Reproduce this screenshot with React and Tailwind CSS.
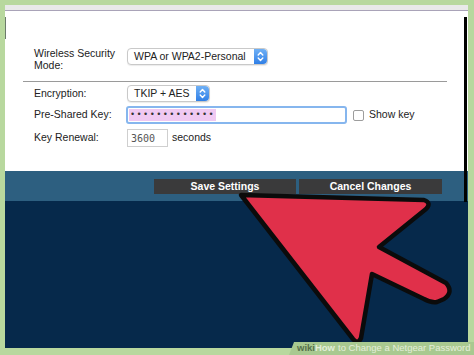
import React from "react";

function Stepper() {
  return (
    <div className="flex h-full w-[13px] items-center justify-center rounded-r-[4px] bg-gradient-to-b from-[#6fb0f5] to-[#2f7fe6]">
      <svg width="7" height="11" viewBox="0 0 7 11" fill="none" stroke="white" strokeWidth="1.4" strokeLinecap="round" strokeLinejoin="round">
        <path d="M1.2 4 L3.5 1.6 L5.8 4" />
        <path d="M1.2 7 L3.5 9.4 L5.8 7" />
      </svg>
    </div>
  );
}

function Select({ label, width }) {
  return (
    <div className={`flex h-[17px] ${width} items-stretch rounded-[4px] border border-[#c9c9c9] bg-white shadow-[0_1px_1px_rgba(0,0,0,0.08)]`}>
      <div className="flex flex-1 items-center pl-[6px] text-[10.5px] text-[#222]">{label}</div>
      <Stepper />
    </div>
  );
}

export default function App() {
  return (
    <div className="relative h-[355px] w-[474px] overflow-hidden bg-[#b8d89e] font-['Liberation_Sans',Arial,sans-serif]">
      <div className="ml-[5px] pt-[5px] w-[463px]">
        {/* top grey bar */}
        <div className="h-[6px] border-b border-[#a9a3b8] bg-[#e9e9e9]" />
        {/* white form area */}
        <div className="relative h-[160px] bg-white pl-[29px] pt-[36px]">
          <div className="absolute left-0 top-[6px] h-[22px] w-[1px] bg-[#6b7a6b]" />
          <div className="flex items-start">
            <div className="w-[93px] text-[10.5px] leading-[12px] text-[#222]">
              Wireless Security
              <br />
              Mode:
            </div>
            <div className="pt-[1px]">
              <Select label="WPA or WPA2-Personal" width="w-[141px]" />
            </div>
          </div>
          <div className="ml-[-11px] mt-[10px] h-[1px] w-[424px] bg-[#9a9a9a]" />
          <div className="mt-[3px] flex items-center">
            <div className="w-[93px] text-[10.5px] text-[#222]">Encryption:</div>
            <Select label="TKIP + AES" width="w-[83px]" />
          </div>
          <div className="mt-[4px] flex items-center">
            <div className="w-[92px] text-[10.5px] text-[#222]">Pre-Shared Key:</div>
            <div className="flex h-[18px] w-[221px] items-center rounded-[3px] border-2 border-[#86b6ee] bg-white pl-[1px]">
              <div className="flex h-[12px] items-center bg-[#f0c9f2] pl-[2px] text-[9px] tracking-[3.4px] text-[#333]">
                •••••••••••••
              </div>
            </div>
            <div className="ml-[6px] h-[11px] w-[11px] rounded-[2px] border border-[#9d9d9d] bg-white" />
            <div className="ml-[5px] text-[10.5px] text-[#222]">Show key</div>
          </div>
          <div className="mt-[5px] flex items-center">
            <div className="w-[93px] text-[10.5px] text-[#222]">Key Renewal:</div>
            <div className="flex h-[18px] w-[41px] items-center border border-[#cfcfcf] pl-[3px] font-['DejaVu_Sans_Mono',monospace] text-[10px] text-[#555]">
              3600
            </div>
            <div className="ml-[4px] text-[10.5px] text-[#222]">seconds</div>
          </div>
        </div>
        {/* teal bar */}
        <div className="flex h-[30px] items-start bg-[#2d5f80] pl-[149px] pt-[8px]">
          <div className="flex h-[15px] w-[142px] items-center justify-center bg-[#3a3a3b] text-[10.5px] font-bold text-white">
            Save Settings
          </div>
          <div className="ml-[3px] flex h-[15px] w-[143px] items-center justify-center bg-[#3a3a3b] text-[10.5px] font-bold text-white">
            Cancel Changes
          </div>
        </div>
        {/* navy area */}
        <div className="h-[147px] bg-[#06294b]" />
      </div>

      {/* right black edge */}
      <div className="absolute left-[464px] top-[17px] h-[185px] w-[3px] bg-black" />

      {/* red arrow */}
      <svg className="absolute left-0 top-0" width="474" height="355" viewBox="0 0 474 355">
        <path
          d="M241 195 L424 200 Q432 203 426 209 L379 247 L446 283 Q454 292 444 299 L437 302 Q431 303 424 299 L372 274 L361 338 Q358 345 353 339 Z"
          fill="#e0304a"
          stroke="#0b0b0b"
          strokeWidth="4.5"
          strokeLinejoin="round"
        />
      </svg>

      {/* wikiHow strip */}
      <div className="absolute bottom-0 right-0 flex h-[13px] w-[185px] items-center bg-[#a8c990] pl-[8px] text-[9.5px] [clip-path:polygon(5px_0,100%_0,100%_100%,0_100%)]">
        <span className="font-bold text-[#56704a]">wiki</span>
        <span className="font-bold text-[#e4eed9]">How</span>
        <span className="ml-[3px] text-[#e4eed9]">to Change a Netgear Password</span>
      </div>
    </div>
  );
}
